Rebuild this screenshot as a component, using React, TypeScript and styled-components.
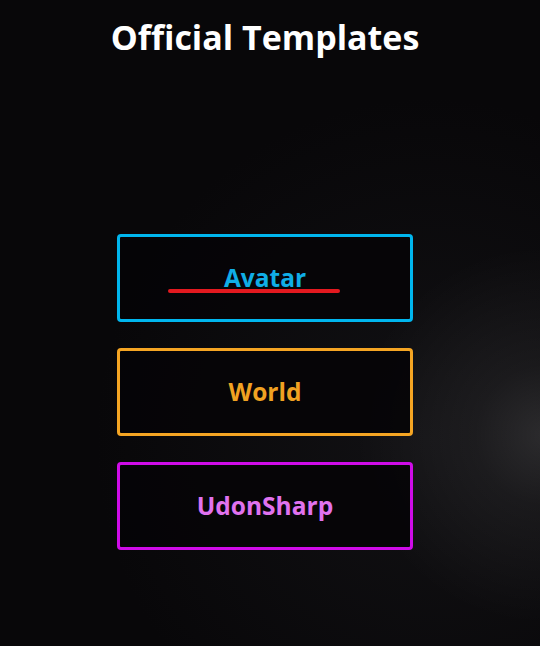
import React from 'react';
import styled, { createGlobalStyle } from 'styled-components';

const GlobalStyle = createGlobalStyle`
  html, body {
    margin: 0;
    padding: 0;
    background: #080709;
  }
  body {
    font-family: "Open Sans", "Noto Sans", sans-serif;
  }
`;

const Page = styled.div`
  width: 540px;
  height: 646px;
  overflow: hidden;
  background:
    radial-gradient(circle at 545px 435px, rgba(255, 255, 255, 0.12) 0px, rgba(255, 255, 255, 0.05) 70px, rgba(255, 255, 255, 0) 190px),
    radial-gradient(ellipse at 430px 440px, rgba(36, 36, 40, 0.35) 0%, rgba(0, 0, 0, 0) 55%),
    #080709;
`;

const Column = styled.div`
  width: 530px;
  display: flex;
  flex-direction: column;
  align-items: center;
`;

const Title = styled.h1`
  margin: 14px 0 0;
  color: #ffffff;
  font-size: 34px;
  font-weight: 700;
  line-height: 46px;
`;

const List = styled.div`
  margin-top: 174px;
  display: flex;
  flex-direction: column;
  gap: 26px;
`;

const Card = styled.button<{ $color: string; $text: string }>`
  position: relative;
  width: 296px;
  height: 88px;
  box-sizing: border-box;
  border: 3px solid ${(p) => p.$color};
  border-radius: 4px;
  background: rgba(5, 4, 7, 0.9);
  color: ${(p) => p.$text};
  font-family: "Open Sans", "Noto Sans", sans-serif;
  font-size: 24.5px;
  font-weight: 700;
  display: flex;
  align-items: center;
  justify-content: center;
  padding: 0 0 2px;
  cursor: pointer;
`;

const Underline = styled.span`
  position: absolute;
  left: 48px;
  top: 52px;
  width: 172px;
  height: 4px;
  border-radius: 2px;
  background: #e3191f;
`;

const templates = [
  { name: 'Avatar', color: '#00b6ee', text: '#10aee6', underline: true },
  { name: 'World', color: '#f5a523', text: '#f0a222', underline: false },
  { name: 'UdonSharp', color: '#cf0ce8', text: '#e072ef', underline: false },
];

export default function App() {
  return (
    <Page>
      <GlobalStyle />
      <Column>
        <Title>Official Templates</Title>
        <List>
          {templates.map((t) => (
            <Card key={t.name} $color={t.color} $text={t.text}>
              {t.name}
              {t.underline && <Underline />}
            </Card>
          ))}
        </List>
      </Column>
    </Page>
  );
}
